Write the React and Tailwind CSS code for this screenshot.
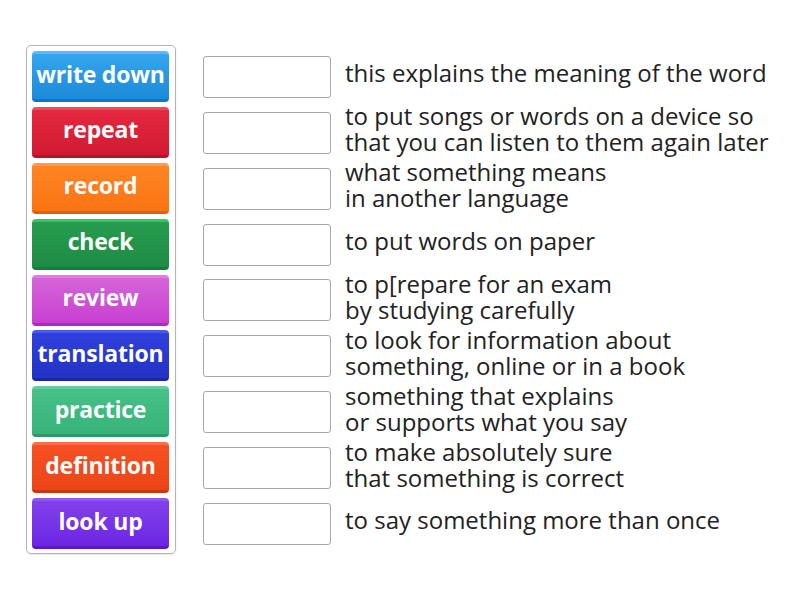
import React from "react";

const words = [
  { t: "write down", c: "bg-gradient-to-b from-[#34a6ee] to-[#1b8ad8] border-t-[#5cbaf4] border-b-[#1573c0]" },
  { t: "repeat", c: "bg-gradient-to-b from-[#e4283f] to-[#d11a32] border-t-[#ee4a5e] border-b-[#b01528]" },
  { t: "record", c: "bg-gradient-to-b from-[#ff8422] to-[#fa7412] border-t-[#ff9d4a] border-b-[#dc620c]" },
  { t: "check", c: "bg-gradient-to-b from-[#269c4e] to-[#1f8c44] border-t-[#35c46a] border-b-[#1a7a3a]" },
  { t: "review", c: "bg-gradient-to-b from-[#d564d9] to-[#c83ed0] border-t-[#e07ee4] border-b-[#b02ab8]" },
  { t: "translation", c: "bg-gradient-to-b from-[#3040dc] to-[#2232c4] border-t-[#4a5ae8] border-b-[#1a28a8]" },
  { t: "practice", c: "bg-gradient-to-b from-[#45c189] to-[#37b47a] border-t-[#5ed29c] border-b-[#2a9a66]" },
  { t: "definition", c: "bg-gradient-to-b from-[#f65124] to-[#ec4414] border-t-[#ff6e44] border-b-[#c8380c]" },
  { t: "look up", c: "bg-gradient-to-b from-[#8140ea] to-[#6d24e4] border-t-[#9456f0] border-b-[#5a18c8]" },
];

const defs = [
  ["this explains the meaning of the word"],
  ["to put songs or words on a device so", "that you can listen to them again later"],
  ["what something means", "in another language"],
  ["to put words on paper"],
  ["to p[repare for an exam", "by studying carefully"],
  ["to look for information about", "something, online or in a book"],
  ["something that explains", "or supports what you say"],
  ["to make absolutely sure", "that something is correct"],
  ["to say something more than once"],
];

export default function App() {
  return (
    <div
      className="w-[800px] h-[600px] bg-white relative"
      style={{ fontFamily: "'Open Sans', 'Noto Sans', sans-serif" }}
    >
      <div className="flex pt-[45px] pl-[26px]">
        <div className="w-[150px] h-[509px] border border-[#b4b4b4] rounded-[5px] px-[5px] pt-[5px] flex flex-col gap-[4.875px] shadow-[0_1px_2px_rgba(0,0,0,0.1)]">
          {words.map((w) => (
            <div
              key={w.t}
              className={`h-[51px] w-[137px] shrink-0 rounded-[4px] border-t-[3px] border-b-[3px] flex items-center justify-center text-white font-bold text-[23px] leading-none tracking-[-0.2px] ${w.c}`}
            >
              <span className="-mt-[5px]">{w.t}</span>
            </div>
          ))}
        </div>
        <div className="flex flex-col ml-[27px] pt-[4px]">
          {defs.map((d, i) => (
            <div key={i} className="h-[55.875px] flex items-center">
              <div className="w-[128px] h-[42px] border border-[#a8a8a8] rounded-[3px] bg-white shrink-0" />
              <div className="ml-[14px] text-[24px] leading-[26px] text-[#222] -mt-[7px] whitespace-nowrap">
                {d.map((l, j) => (
                  <div key={j}>{l}</div>
                ))}
              </div>
            </div>
          ))}
        </div>
      </div>
    </div>
  );
}
